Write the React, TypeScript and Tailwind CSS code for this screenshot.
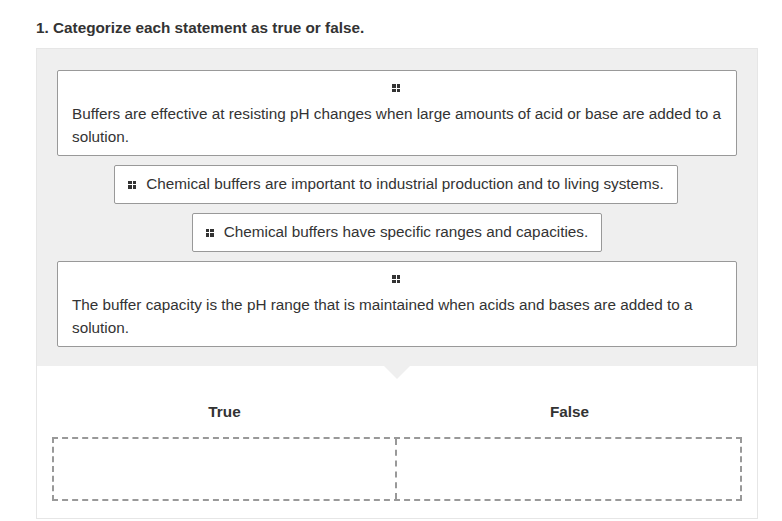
import React from 'react'

const font = { fontFamily: '"Liberation Sans", Arial, sans-serif' }

function Grip() {
  return (
    <span className="inline-grid grid-cols-2 gap-[1px] w-[8px] h-[8px] align-middle">
      <span className="bg-[#333] w-[3.5px] h-[3.5px]" />
      <span className="bg-[#333] w-[3.5px] h-[3.5px]" />
      <span className="bg-[#333] w-[3.5px] h-[3.5px]" />
      <span className="bg-[#333] w-[3.5px] h-[3.5px]" />
    </span>
  )
}

function WideCard({ text }: { text: string }) {
  return (
    <div className="bg-white border border-[#999] rounded-[2px] pl-[14px] pr-[10px] pt-[10px] pb-[7px]">
      <div className="flex justify-center h-[14px] items-center pr-[6px]">
        <Grip />
      </div>
      <p className="mt-[7px] text-[15.3px] leading-[23px] text-[#333]">{text}</p>
    </div>
  )
}

function InlineCard({ text }: { text: string }) {
  return (
    <div className="bg-white border border-[#999] rounded-[2px] px-[13px] h-[39px] flex items-center gap-[10px]">
      <Grip />
      <span className="text-[15.3px] text-[#333]">{text}</span>
    </div>
  )
}

export default function App() {
  return (
    <div className="bg-white w-[782px] h-[521px] pl-[36px] pr-[24px] pt-[18px]" style={font}>
      <h1 className="text-[15.3px] font-bold text-[#333] leading-[20px]">1. Categorize each statement as true or false.</h1>
      <div className="mt-[10px] border border-[#e6e6e6]">
        <div className="relative bg-[#efefef] px-[20px] pt-[21px] pb-[19px] flex flex-col gap-[9px]">
          <WideCard text="Buffers are effective at resisting pH changes when large amounts of acid or base are added to a solution." />
          <div className="flex justify-center pr-[2px]">
            <InlineCard text="Chemical buffers are important to industrial production and to living systems." />
          </div>
          <div className="flex justify-center">
            <InlineCard text="Chemical buffers have specific ranges and capacities." />
          </div>
          <WideCard text="The buffer capacity is the pH range that is maintained when acids and bases are added to a solution." />
          <div className="absolute left-[347px] -bottom-[13px] w-0 h-0 border-l-[13px] border-r-[13px] border-t-[13px] border-l-transparent border-r-transparent border-t-[#efefef]" />
        </div>
        <div className="bg-white px-[15px] pt-[34px] pb-[17px]">
          <div className="grid grid-cols-2 leading-[23px]">
            <div className="text-center text-[15.3px] font-bold text-[#333]">True</div>
            <div className="text-center text-[15.3px] font-bold text-[#333]">False</div>
          </div>
          <div className="mt-[14px] grid grid-cols-2 border-2 border-dashed border-[#999] h-[64px]">
            <div className="border-r-2 border-dashed border-[#999]" />
            <div />
          </div>
        </div>
      </div>
    </div>
  )
}
